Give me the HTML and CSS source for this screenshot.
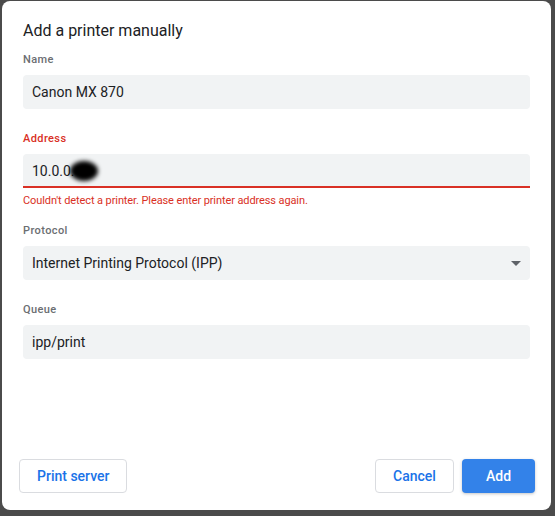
FILE: index.html
```html
<!DOCTYPE html>
<html>
<head>
<meta charset="utf-8">
<link rel="stylesheet" href="styles.css">
</head>
<body>
<div class="dialog">
  <div class="content">
    <h1 class="title">Add a printer manually</h1>
    <div class="field">
      <div class="label">Name</div>
      <div class="input">Canon MX 870</div>
    </div>
    <div class="field field-error">
      <div class="label">Address</div>
      <div class="input input-error">10.0.0.<span class="blob"></span></div>
      <div class="error">Couldn't detect a printer. Please enter printer address again.</div>
    </div>
    <div class="field">
      <div class="label">Protocol</div>
      <div class="input select">Internet Printing Protocol (IPP)<span class="arrow"></span></div>
    </div>
    <div class="field">
      <div class="label">Queue</div>
      <div class="input">ipp/print</div>
    </div>
  </div>
  <div class="footer">
    <button class="btn btn-secondary">Print server</button>
    <div class="spacer"></div>
    <button class="btn btn-secondary btn-cancel">Cancel</button>
    <button class="btn btn-primary">Add</button>
  </div>
</div>
</body>
</html>
```
FILE: styles.css
```css
html, body {
  margin: 0;
  padding: 0;
  background: #4b4b4b;
}
body {
  width: 555px;
  height: 516px;
  overflow: hidden;
  font-family: Roboto, "Liberation Sans", sans-serif;
}
.dialog {
  margin: 1px 0 0 2px;
  width: 549px;
  height: 509px;
  background: #ffffff;
  border-radius: 8px;
  display: flex;
  flex-direction: column;
  box-sizing: border-box;
}
.content {
  padding: 20px 21px 0 21px;
}
.title {
  margin: 0;
  font-size: 16px;
  line-height: 20px;
  font-weight: 400;
  color: #202124;
}
.field {
  margin-top: 22px;
}
.field:first-of-type {
  margin-top: 11px;
}
.label {
  font-size: 11px;
  line-height: 16px;
  font-weight: 500;
  letter-spacing: 0.4px;
  color: #6b6e72;
  margin-bottom: 7px;
}
.input {
  height: 34px;
  box-sizing: border-box;
  background: #f1f3f4;
  border-radius: 4px;
  padding: 0 9px;
  display: flex;
  align-items: center;
  font-size: 14px;
  color: #202124;
  position: relative;
}
.field-error .label {
  color: #d93025;
}
.input-error {
  border-radius: 4px 4px 0 0;
  border-bottom: 2px solid #d93025;
  padding-top: 2px;
}
.blob {
  display: inline-block;
  width: 28px;
  height: 20px;
  margin-left: -5px;
  border-radius: 50%;
  background: #000;
  filter: blur(2px);
}
.error {
  margin-top: 5px;
  font-size: 11px;
  line-height: 16px;
  letter-spacing: -0.1px;
  color: #d93025;
}
.field-error + .field {
  margin-top: 14px;
}
.arrow {
  position: absolute;
  right: 9px;
  top: 15px;
  width: 0;
  height: 0;
  border-left: 5px solid transparent;
  border-right: 5px solid transparent;
  border-top: 5px solid #5f6368;
}
.footer {
  margin-top: auto;
  padding: 0 16px 17px 17px;
  display: flex;
  align-items: center;
}
.spacer {
  flex: 1;
}
.btn {
  height: 34px;
  box-sizing: border-box;
  border-radius: 4px;
  font-family: Roboto, "Liberation Sans", sans-serif;
  font-size: 14px;
  font-weight: 500;
  cursor: pointer;
}
.btn-secondary {
  background: #ffffff;
  border: 1px solid #dadce0;
  color: #1a73e8;
  padding: 0 17px;
}
.btn-cancel {
  width: 79px;
  padding: 0;
}
.btn-primary {
  margin-left: 8px;
  width: 73px;
  background: #3382e9;
  border: none;
  color: #ffffff;
  box-shadow: 0 1px 3px rgba(60, 64, 67, 0.3);
}
```
